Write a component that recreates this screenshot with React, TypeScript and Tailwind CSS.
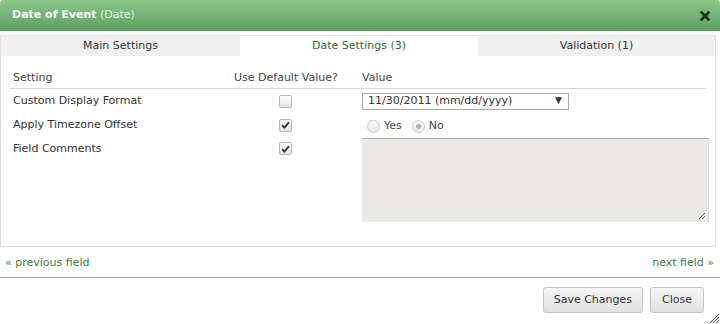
import React from "react";

function Check({ checked }: { checked: boolean }) {
  return (
    <span className="inline-flex h-[13px] w-[13px] items-center justify-center rounded-[2px] border border-[#b5b5b5] bg-gradient-to-b from-[#fdfdfd] to-[#e4e4e4]">
      {checked && (
        <svg width="9" height="8" viewBox="0 0 9 8">
          <path d="M1 4.2 L3.4 6.6 L8 1.2" fill="none" stroke="#333" strokeWidth="1.8" />
        </svg>
      )}
    </span>
  );
}

function Radio({ checked }: { checked: boolean }) {
  return (
    <span className="inline-flex h-[13px] w-[13px] items-center justify-center rounded-full border border-[#c8c8c8] bg-gradient-to-b from-[#fbfbfb] to-[#e8e8e8]">
      {checked && <span className="h-[5px] w-[5px] rounded-full bg-[#b0b0b0]" />}
    </span>
  );
}

export default function App() {
  return (
    <div
      className="relative h-[324px] w-[720px] overflow-hidden bg-white text-[11px] text-[#333]"
      style={{ fontFamily: '"DejaVu Sans", Verdana, sans-serif' }}
    >
      {/* header */}
      <div className="flex h-[31px] items-center justify-between rounded-t-[4px] bg-gradient-to-b from-[#8ac78b] to-[#5d9f5f] pl-[12px] pr-[10px] text-white">
        <div className="text-[11px]">
          <span className="font-bold">Date of Event</span>
          <span className="text-[#e4f2e4]"> (Date)</span>
        </div>
        <svg width="10" height="10" viewBox="0 0 10 10">
          <path d="M1.5 1.5 L8.5 8.5 M8.5 1.5 L1.5 8.5" stroke="#1d2a1d" strokeWidth="2.6" strokeLinecap="square" />
        </svg>
      </div>

      {/* panel */}
      <div className="mt-[4px] mr-[4px] border border-[#dcdcdc] border-t-[#e4e4e4]">
        <div className="flex h-[20px]">
          <div className="flex w-[239px] items-center justify-center bg-[#f0f0f0] text-[#333]">Main Settings</div>
          <div className="flex w-[238px] items-center justify-center bg-white text-[#2f6b2f]">Date Settings (3)</div>
          <div className="flex flex-1 items-center justify-center bg-[#f0f0f0] text-[#333]">Validation (1)</div>
        </div>

        <div className="px-[9px] pt-[12px] pb-[24px]">
          <div className="flex h-[21px] items-center border-b border-[#d6d6d6] text-[#444]">
            <div className="w-[224px] pl-[3px]">Setting</div>
            <div className="w-[128px]">Use Default Value?</div>
            <div>Value</div>
          </div>

          <div className="flex h-[24px] items-center">
            <div className="w-[224px] pl-[3px]">Custom Display Format</div>
            <div className="flex w-[128px] pl-[45px]"><Check checked={false} /></div>
            <div className="flex h-[17px] w-[207px] items-center justify-between border border-[#a9a9a9] bg-white pl-[5px] pr-[6px]">
              <span>11/30/2011 (mm/dd/yyyy)</span>
              <span className="text-[9px]">▼</span>
            </div>
          </div>

          <div className="flex h-[24px] items-center">
            <div className="w-[224px] pl-[3px]">Apply Timezone Offset</div>
            <div className="flex w-[128px] pl-[45px]"><Check checked={true} /></div>
            <div className="flex items-center pl-[5px] pt-[3px] text-[#444]">
              <Radio checked={false} />
              <span className="ml-[4px] mr-[10px]">Yes</span>
              <Radio checked={true} />
              <span className="ml-[4px]">No</span>
            </div>
          </div>

          <div className="flex items-start pt-[1px]">
            <div className="w-[224px] pl-[3px] pt-[4px] leading-[14px]">Field Comments</div>
            <div className="flex w-[128px] pl-[45px] pt-[4px]"><Check checked={true} /></div>
            <div className="relative mr-[-3px] h-[84px] flex-1 border-t border-r border-[#b0b0b0] border-r-[#d8d8d8] bg-[#eae9e5]">
              <svg className="absolute bottom-[2px] right-[2px]" width="8" height="8" viewBox="0 0 8 8">
                <path d="M7 1 L1 7 M7 4 L4 7" stroke="#555" strokeWidth="1" />
              </svg>
            </div>
          </div>
        </div>
      </div>

      {/* nav links */}
      <div className="flex h-[31px] items-center justify-between border-b border-[#aaaaaa] pt-[2px] pl-[5px] pr-[6px] text-[#3a7f3a]">
        <span>« previous field</span>
        <span>next field »</span>
      </div>

      {/* buttons */}
      <div className="flex justify-end gap-[7px] pr-[16px] pt-[9px]">
        <button className="h-[26px] rounded-[3px] border border-[#c6c6c6] bg-gradient-to-b from-[#f6f6f6] to-[#e0e0e0] px-[10px] text-[11px] text-[#333]">
          Save Changes
        </button>
        <button className="h-[26px] rounded-[3px] border border-[#c6c6c6] bg-gradient-to-b from-[#f6f6f6] to-[#e0e0e0] px-[11px] text-[11px] text-[#333]">
          Close
        </button>
      </div>

      <svg className="absolute bottom-0 right-0" width="12" height="12" viewBox="0 0 12 12">
        <path d="M11 2 L2 11 M11 5 L5 11 M11 8 L8 11" stroke="#444" strokeWidth="1" />
      </svg>
    </div>
  );
}
